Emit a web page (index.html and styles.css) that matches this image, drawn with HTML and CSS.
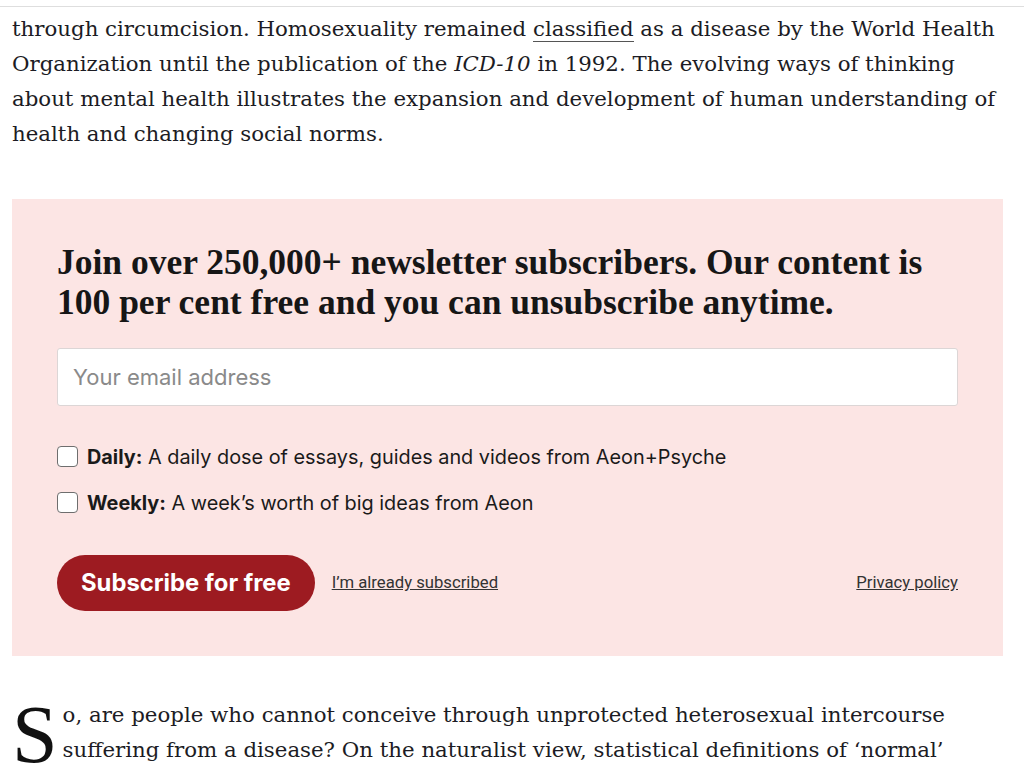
FILE: index.html
```html
<!DOCTYPE html>
<html lang="en">
<head>
<meta charset="utf-8">
<title>Aeon essay</title>
<link rel="stylesheet" href="styles.css">
</head>
<body>
<div class="topbar"></div>
<main class="article">
  <p class="text first">a mental illness that doctors believed could be treated, for instance, in young boys, often
  through circumcision. Homosexuality remained <a class="inline" href="#">classified</a> as a disease by the World Health Organization until the publication of the <em>ICD-10</em> in 1992. The evolving ways of thinking about mental health illustrates the expansion and development of human understanding of health and changing social norms.</p>

  <section class="signup">
    <h2 class="signup-title">Join over 250,000+ newsletter subscribers. Our content is 100 per cent free and you can unsubscribe anytime.</h2>
    <input class="email" type="email" placeholder="Your email address">
    <div class="options">
      <label class="option"><input class="check" type="checkbox"><span><b>Daily:</b> A daily dose of essays, guides and videos from Aeon+Psyche</span></label>
      <label class="option"><input class="check" type="checkbox"><span><b>Weekly:</b> A week’s worth of big ideas from Aeon</span></label>
    </div>
    <div class="actions">
      <button class="subscribe" type="button">Subscribe for free</button>
      <a class="small-link" href="#">I’m already subscribed</a>
      <a class="small-link privacy" href="#">Privacy policy</a>
    </div>
  </section>

  <p class="text dropcap-para"><span class="dropcap">S</span>o, are people who cannot conceive through unprotected heterosexual intercourse suffering from a disease? On the naturalist view, statistical definitions of ‘normal’ functioning are used to decide what counts as a disease, and what does not.</p>
</main>
</body>
</html>
```

FILE: styles.css
```css
html, body {
  margin: 0;
  padding: 0;
  background: #ffffff;
  overflow: hidden;
}

.topbar {
  position: fixed;
  top: 0;
  left: 0;
  right: 0;
  height: 6px;
  background: #ffffff;
  border-bottom: 1px solid #dedede;
  z-index: 2;
}

.article {
  padding: 0 21px 0 12px;
}

.text {
  font-family: "DejaVu Serif", "Liberation Serif", serif;
  font-size: 21.3px;
  line-height: 34.8px;
  color: #1c1c24;
  margin: 0;
}

.text.first {
  margin-top: -22.7px;
}

.text em {
  font-style: italic;
}

.inline {
  color: inherit;
  text-decoration: none;
  border-bottom: 1px solid #555;
}

.signup {
  background: #fce5e4;
  margin-top: 47.4px;
  padding: 43px 45px 45px 45px;
}

.signup-title {
  font-family: "Liberation Serif", "Times New Roman", serif;
  font-weight: bold;
  font-size: 35.5px;
  line-height: 40px;
  color: #161616;
  margin: 0;
}

.email {
  display: block;
  box-sizing: border-box;
  width: 100%;
  height: 58px;
  margin-top: 26px;
  padding: 0 15px;
  background: #ffffff;
  border: 1px solid #dcd6d6;
  border-radius: 3px;
  font-family: "Inter", "Liberation Sans", sans-serif;
  font-size: 22px;
  color: #333;
  outline: none;
}

.email::placeholder {
  color: #8a8a8a;
}

.options {
  display: flex;
  flex-direction: column;
  gap: 20px;
  margin-top: 38px;
}

.option {
  display: flex;
  align-items: center;
  height: 26px;
  font-family: "Inter", "Liberation Sans", sans-serif;
  font-size: 19.85px;
  color: #1a1a1a;
}

.option b {
  font-weight: 700;
}

.check {
  appearance: none;
  -webkit-appearance: none;
  box-sizing: border-box;
  width: 21px;
  height: 21px;
  margin: 0 9px 0 0;
  border: 1.5px solid #6e6e6e;
  border-radius: 4px;
  background: #ffffff;
  flex: none;
}

.actions {
  display: flex;
  align-items: center;
  margin-top: 39px;
}

.subscribe {
  height: 56px;
  padding: 0 24px;
  border: none;
  border-radius: 28px;
  background: #9d1b21;
  color: #ffffff;
  font-family: "Inter", "Liberation Sans", sans-serif;
  font-weight: 700;
  font-size: 23.8px;
  cursor: pointer;
}

.small-link {
  font-family: "Roboto", "Liberation Sans", sans-serif;
  font-size: 16.7px;
  color: #333333;
  text-decoration: underline;
  margin-left: 17px;
}

.small-link.privacy {
  margin-left: auto;
}

.dropcap-para {
  margin-top: 42.5px;
}

.dropcap {
  float: left;
  font-family: "Liberation Serif", "Times New Roman", serif;
  font-size: 82px;
  line-height: 74px;
  margin-right: 5px;
  color: #111;
}
```
